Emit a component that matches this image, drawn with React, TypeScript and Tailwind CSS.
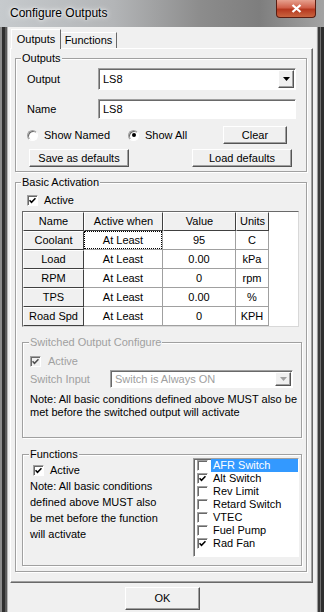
import type { ReactNode } from "react";

const raised =
  "border border-t-white border-l-white border-r-[#555] border-b-[#555] shadow-[inset_-1px_-1px_0_#a0a0a0]";
const sunken =
  "border border-t-[#a0a0a0] border-l-[#a0a0a0] border-r-white border-b-white shadow-[inset_1px_1px_0_#696969]";
const etched = "border border-[#a0a0a0] shadow-[inset_1px_1px_0_#fff,1px_1px_0_#fff]";

function Btn({ children, className = "" }: { children: ReactNode; className?: string }) {
  return (
    <button
      type="button"
      className={`flex items-center justify-center bg-[#f0f0f0] text-[11px] leading-none text-black ${raised} ${className}`}
    >
      {children}
    </button>
  );
}

function Check({ on, dim = false }: { on: boolean; dim?: boolean }) {
  return (
    <span
      className={`flex h-[11px] w-[11px] shrink-0 items-center justify-center ${sunken} ${
        dim ? "bg-[#f0f0f0]" : "bg-white"
      }`}
    >
      {on && (
        <svg width="7" height="7" viewBox="0 0 7 7">
          <path d="M0.5 3.2 2.5 5.3 6.5 1.2" fill="none" stroke={dim ? "#505050" : "#000"} strokeWidth="1.6" />
        </svg>
      )}
    </span>
  );
}

function Radio({ on = false }: { on?: boolean }) {
  return (
    <span
      className={`flex h-[11px] w-[11px] shrink-0 items-center justify-center rounded-full bg-white ${sunken}`}
    >
      {on && <span className="h-[4px] w-[4px] rounded-full bg-black" />}
    </span>
  );
}

function Combo({ value, dim = false, className = "" }: { value: string; dim?: boolean; className?: string }) {
  return (
    <div className={`flex items-stretch bg-white p-[1px] ${sunken} ${className}`}>
      <span className={`flex flex-1 items-center pl-[3px] ${dim ? "text-[#a0a0a0]" : "text-black"}`}>{value}</span>
      <span className={`flex w-[16px] items-center justify-center bg-[#f0f0f0] ${raised}`}>
        <svg width="7" height="4" viewBox="0 0 7 4">
          <path d="M0 0h7L3.5 4z" fill={dim ? "#a0a0a0" : "#000"} />
        </svg>
      </span>
    </div>
  );
}

const gridHead = "flex items-center justify-center bg-[#f0f0f0] border border-t-white border-l-white border-r-[#404040] border-b-[#404040]";
const gridCell = "flex items-center justify-center border-r border-b border-[#a0a0a0] bg-white";

const rows = [
  ["Coolant", "At Least", "95", "C"],
  ["Load", "At Least", "0.00", "kPa"],
  ["RPM", "At Least", "0", "rpm"],
  ["TPS", "At Least", "0.00", "%"],
  ["Road Spd", "At Least", "0", "KPH"],
];

const functions: [string, boolean][] = [
  ["AFR Switch", false],
  ["Alt Switch", true],
  ["Rev Limit", false],
  ["Retard Switch", false],
  ["VTEC", false],
  ["Fuel Pump", false],
  ["Rad Fan", true],
];

function TitleBar() {
  return (
    <div className="flex h-[27px] shrink-0 bg-[linear-gradient(to_right,#c6cacd,#b3b5b7_35%,#8c8c8c_62%,#7e7e7e_80%,#a3a3a3)]">
      <span className="ml-[10px] mt-[6px] text-[12px] leading-[14px] text-black [text-shadow:0_0_6px_#fff,0_0_3px_#fff]">
        Configure Outputs
      </span>
      <div className="ml-auto mr-[8px] flex h-[18px] w-[40px] items-center justify-center rounded-b-[4px] border border-t-0 border-[#5a1d12] bg-[linear-gradient(to_bottom,#e6a08e,#d0604a_45%,#b5381f_55%,#c9643f)]">
        <svg width="11" height="9" viewBox="0 0 11 9">
          <path d="M1.5 1 9.5 8M9.5 1 1.5 8" stroke="#fff" strokeWidth="2.3" />
        </svg>
      </div>
    </div>
  );
}

export default function App() {
  return (
    <div className="flex h-[612px] w-[324px] flex-col overflow-hidden bg-[#5e5e5e] font-['Liberation_Sans',Arial,sans-serif] text-[11px] leading-[13px] text-black">
      <TitleBar />
      <div className="flex flex-1">
        <div className="w-[8px] bg-[linear-gradient(to_right,#8c8c8c_0,#8c8c8c_2px,#2f2f2f_2px,#2f2f2f_5px,#5c5c5c_5px,#5c5c5c_7px,#b8b8b8_7px)]" />
        <div className="flex w-[308px] flex-col bg-[#f0f0f0]">
          {/* tabs */}
          <div className="ml-[3px] mt-[2px] flex h-[19px] items-end">
            <div className="relative z-10 mb-[-1px] flex h-[20px] w-[50px] items-center justify-center border border-b-0 border-t-white border-l-white border-r-[#696969] bg-[#f0f0f0] pb-[1px]">
              Outputs
            </div>
            <div className="flex h-[16px] w-[56px] items-center justify-center border border-b-0 border-l-0 border-t-white border-r-[#696969] bg-[#f0f0f0]">
              Functions
            </div>
          </div>

          <div className="ml-[2px] h-[535px] w-[303px] border border-t-white border-l-white border-r-[#696969] border-b-[#696969] shadow-[inset_-1px_-1px_0_#a0a0a0]">
            {/* Outputs */}
            <fieldset className={`ml-[4px] mt-[3px] w-[292px] p-0 ${etched}`}>
              <legend className="ml-[5px] bg-[#f0f0f0] px-[1px]">Outputs</legend>
              <div className="pb-[4px] pl-[11px]">
                <div className="mt-[3px] flex h-[22px] items-center">
                  <span className="w-[71px]">Output</span>
                  <Combo value="LS8" className="h-[22px] w-[198px]" />
                </div>
                <div className="mt-[9px] flex h-[20px] items-center">
                  <span className="w-[71px]">Name</span>
                  <div className={`flex h-[20px] w-[198px] items-center bg-white pl-[4px] ${sunken}`}>LS8</div>
                </div>
                <div className="mt-[7px] flex h-[18px] items-center">
                  <span className="flex w-[101px] items-center gap-[6px]">
                    <Radio />
                    Show Named
                  </span>
                  <span className="flex w-[95px] items-center gap-[6px]">
                    <Radio on />
                    Show All
                  </span>
                  <Btn className="h-[18px] w-[64px]">Clear</Btn>
                </div>
                <div className="mt-[5px] flex h-[18px] items-center">
                  <Btn className="ml-[2px] h-[18px] w-[100px]">Save as defaults</Btn>
                  <Btn className="ml-[63px] h-[18px] w-[100px]">Load defaults</Btn>
                </div>
              </div>
            </fieldset>

            {/* Basic Activation */}
            <fieldset className={`ml-[4px] mt-[4px] w-[292px] p-0 ${etched}`}>
              <legend className="ml-[5px] bg-[#f0f0f0] px-[1px]">Basic Activation</legend>
              <div className="pb-[5px] pl-[6px]">
                <div className="ml-[5px] mt-[6px] flex h-[11px] items-center gap-[6px]">
                  <Check on />
                  Active
                </div>

                <div className="mt-[5px] flex h-[116px] w-[277px] bg-white border border-t-[#696969] border-l-[#696969] border-r-[#d8d8d8] border-b-[#d8d8d8]">
                  <div className="flex w-[246px] flex-col">
                    <div className="flex h-[19px]">
                      <div className={`${gridHead} w-[61px]`}>Name</div>
                      <div className={`${gridHead} w-[79px]`}>Active when</div>
                      <div className={`${gridHead} w-[73px]`}>Value</div>
                      <div className={`${gridHead} w-[33px]`}>Units</div>
                    </div>
                    {rows.map((r, i) => (
                      <div key={r[0]} className="flex h-[19px]">
                        <div className={`${gridHead} w-[61px]`}>{r[0]}</div>
                        <div className={`${gridCell} w-[79px]`}>
                          {i === 0 ? (
                            <span className="flex h-full w-full items-center justify-center border border-dotted border-black">
                              {r[1]}
                            </span>
                          ) : (
                            r[1]
                          )}
                        </div>
                        <div className={`${gridCell} w-[73px]`}>{r[2]}</div>
                        <div className={`${gridCell} w-[33px]`}>{r[3]}</div>
                      </div>
                    ))}
                  </div>
                </div>

                {/* Switched Output Configure */}
                <fieldset className={`mt-[9px] w-[280px] p-0 ${etched}`}>
                  <legend className="ml-[6px] bg-[#f0f0f0] px-[1px] text-[#a0a0a0]">Switched Output Configure</legend>
                  <div className="pb-[18px] pl-[7px]">
                    <div className="mt-[7px] flex h-[11px] items-center gap-[7px] text-[#a0a0a0]">
                      <Check on dim />
                      Active
                    </div>
                    <div className="mt-[3px] flex h-[18px] items-center">
                      <span className="w-[80px] text-[#a0a0a0]">Switch Input</span>
                      <Combo value="Switch is Always ON" dim className="h-[18px] w-[183px]" />
                    </div>
                    <p className="mt-[5px]">
                      Note: All basic conditions defined above MUST also be
                      <br />
                      met before the switched output will activate
                    </p>
                  </div>
                </fieldset>

                {/* Functions */}
                <fieldset className={`mt-[10px] w-[280px] p-0 ${etched}`}>
                  <legend className="ml-[6px] bg-[#f0f0f0] px-[1px]">Functions</legend>
                  <div className="flex pb-[8px]">
                    <div className="flex flex-col">
                      <div className="ml-[10px] mt-[4px] flex h-[11px] items-center gap-[6px]">
                        <Check on />
                        Active
                      </div>
                      <p className="ml-[7px] mt-[2px] leading-[16px]">
                        Note: All basic conditions
                        <br />
                        defined above MUST also
                        <br />
                        be met before the function
                        <br />
                        will activate
                      </p>
                    </div>
                    <div className={`ml-auto mr-[2px] mt-[-3px] h-[99px] w-[106px] bg-white ${sunken}`}>
                      {functions.map(([label, on], i) => (
                        <div key={label} className="flex h-[13px] items-center pl-[3px]">
                          <Check on={on} />
                          <span
                            className={`ml-[3px] flex h-full flex-1 items-center pl-[2px] ${
                              i === 0 ? "bg-[#3399ff] text-white" : ""
                            }`}
                          >
                            {label}
                          </span>
                        </div>
                      ))}
                    </div>
                  </div>
                </fieldset>
              </div>
            </fieldset>
          </div>

          <div className="ml-[117px] mt-[4px]">
            <Btn className="h-[23px] w-[75px]">OK</Btn>
          </div>
        </div>
        <div className="w-[8px] bg-[linear-gradient(to_right,#e8e8e8_0,#e8e8e8_1px,#9a9a9a_1px,#9a9a9a_2px,#3a3a3a_2px,#3a3a3a_4px,#707070_4px,#707070_5px,#2e2e2e_5px)]" />
      </div>
    </div>
  );
}
